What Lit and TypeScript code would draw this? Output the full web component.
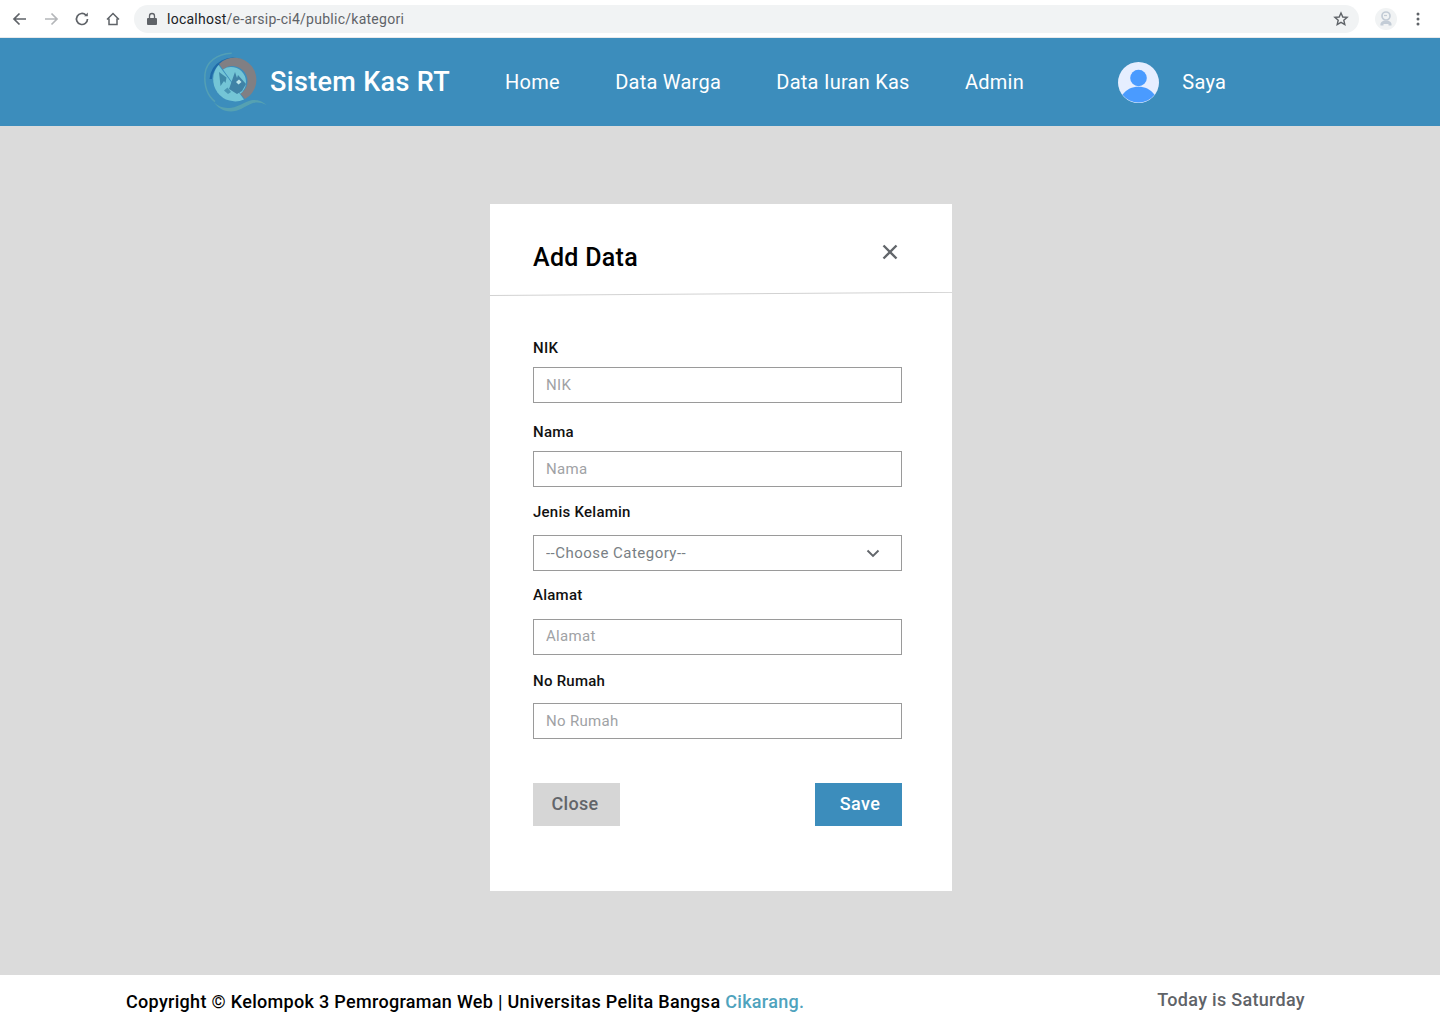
import { LitElement, html, css } from "lit";
import { customElement } from "lit/decorators.js";

@customElement("app-root")
export class AppRoot extends LitElement {
  static styles = css`
    :host { display: block; width: 1440px; height: 1024px; overflow: hidden; font-family: Roboto, "Liberation Sans", sans-serif; background: #dbdbdb; }
    * { box-sizing: border-box; }
    .page { display: flex; flex-direction: column; height: 1024px; }
    .chrome { height: 38px; background: #fff; display: flex; align-items: center; border-bottom: 1px solid #e8e9eb; flex: none; }
    .cicon { width: 20px; height: 20px; flex: none; display: block; }
    .c1 { margin-left: 10px; }
    .c2 { margin-left: 11px; }
    .c3 { margin-left: 11px; }
    .c4 { margin-left: 11px; }
    .omni { margin-left: 11px; width: 1225px; height: 28px; border-radius: 14px; background: #f1f3f4; display: flex; align-items: center; padding: 0 9px 0 12px; flex: none; }
    .lock { width: 12px; height: 14px; flex: none; }
    .url { margin-left: 9px; font-size: 14px; letter-spacing: 0.26px; color: #5f6368; flex: 1; white-space: nowrap; }
    .url b { font-weight: 400; color: #202124; }
    .star { width: 18px; height: 18px; flex: none; }
    .prof { margin-left: 16px; width: 22px; height: 22px; flex: none; }
    .dots { margin-left: 11px; width: 20px; height: 20px; flex: none; }
    nav { height: 88px; background: #3c8dbc; display: flex; align-items: center; padding-left: 202px; color: #fff; flex: none; }
    .logo { width: 66px; height: 60px; flex: none; }
    .brand { margin-left: 2px; font-size: 27px; font-weight: 500; letter-spacing: 0.34px; white-space: nowrap; width: 235px; }
    .link { font-size: 20px; letter-spacing: 0.25px; white-space: nowrap; margin-right: 55.3px; }
    .avatar { width: 41px; height: 41px; flex: none; margin-left: 39px; }
    .saya { margin-left: 23px; font-size: 20px; letter-spacing: 0.25px; }
    main { flex: 1; background: #dbdbdb; padding: 78px 0 0 490px; }
    .modal { width: 462px; height: 687px; background: #fff; display: flex; flex-direction: column; }
    .head { height: 88px; padding: 38px 43px 0; display: flex; justify-content: space-between; align-items: flex-start; flex: none; }
    .title { font-size: 25px; font-weight: 500; color: #000; line-height: 30px; letter-spacing: 0.3px; padding-top: 0.5px; }
    .x { width: 18px; height: 18px; margin: 1px 10px 0 0; }
    .rule { flex: none; height: 4px; display: block; width: 462px; }
    .form { padding: 42px 50px 0 43px; display: flex; flex-direction: column; }
    .field { display: flex; flex-direction: column; position: relative; }
    .field label { font-size: 15px; font-weight: 500; height: 20px; line-height: 20px; color: #111; letter-spacing: 0.25px; }
    .f-nik input { margin-top: 9px; }
    .f-nama { margin-top: 19px; }
    .f-nama input { margin-top: 9px; }
    .f-jk { margin-top: 15px; }
    .f-jk select { margin-top: 13px; letter-spacing: 0.47px; }
    .f-al { margin-top: 14px; }
    .f-al input { margin-top: 14px; padding-bottom: 2px; }
    .f-no { margin-top: 16px; }
    .f-no input { margin-top: 12px; }
    input, select { width: 369px; height: 36px; border: 1px solid #9a9a9a; background: #fff; padding: 0 12px; font: 400 15px Roboto, sans-serif; letter-spacing: 0.3px; border-radius: 0; outline: none; appearance: none; color: #797f85; }
    input::placeholder { color: #a0a2a5; opacity: 1; }
    .chev { position: absolute; right: 22px; bottom: 12px; width: 14px; height: 12px; pointer-events: none; }
    .actions { display: flex; justify-content: space-between; margin-top: 44px; }
    button { width: 87px; height: 43px; border: 0; font: 500 18px Roboto, sans-serif; letter-spacing: 0.35px; border-radius: 0; }
    .close { background: #d6d6d6; color: #62656a; padding: 0 3px 2px 0; }
    .save { background: #3c8dbc; color: #fff; padding: 0 0 2px 3px; }
    footer { height: 49px; background: #fff; flex: none; display: flex; align-items: center; padding: 0 135px 0 126px; justify-content: space-between; }
    .copy { font-size: 18px; font-weight: 500; color: #000; white-space: nowrap; padding-top: 4px; letter-spacing: 0.31px; }
    .copy span { color: #4fa3bd; }
    .today { font-size: 18px; font-weight: 500; color: #5f6368; white-space: nowrap; padding-bottom: 1px; letter-spacing: 0.3px; }
  `;

  private field(cls: string, label: string) {
    return html`<div class="field ${cls}"><label>${label}</label><input placeholder=${label} /></div>`;
  }

  render() {
    return html`<div class="page">
      <div class="chrome">
        <svg class="cicon c1" viewBox="0 0 20 20" fill="none" stroke="#5f6368" stroke-width="1.7"><path d="M16 10H4.5M9.5 4.5 4 10l5.500 5.500"/></svg>
        <svg class="cicon c2" viewBox="0 0 20 20" fill="none" stroke="#b4b6b9" stroke-width="1.7"><path d="M4 10h11.5M10.500 4.500 16 10l-5.500 5.500"/></svg>
        <svg class="cicon c3" viewBox="0 0 20 20" fill="none" stroke="#5f6368" stroke-width="1.7"><path d="M15.500 10a5.500 5.500 0 1 1-1.600-3.900"/><path d="M15.800 3.600v3.600h-3.600" fill="#5f6368" stroke="none"/></svg>
        <svg class="cicon c4" viewBox="0 0 20 20" fill="none" stroke="#5f6368" stroke-width="1.500"><path d="M4 10.500 10 4.500l6 6M6 9.500v6h8v-6"/></svg>
        <div class="omni">
          <svg class="lock" viewBox="0 0 12 14"><path fill="#5f6368" d="M2 6h8a1 1 0 0 1 1 1v5a1 1 0 0 1-1 1H2a1 1 0 0 1-1-1V7a1 1 0 0 1 1-1z"/><path fill="none" stroke="#5f6368" stroke-width="1.300" d="M3.500 6V4a2.500 2.500 0 0 1 5 0v2"/></svg>
          <div class="url"><b>localhost</b>/e-arsip-ci4/public/kategori</div>
          <svg class="star" viewBox="0 0 18 18" fill="none" stroke="#5f6368" stroke-width="1.400"><path d="m9 3 1.800 4 4.300.400-3.300 2.800 1 4.300L9 12.300 5.200 14.500l1-4.300-3.300-2.800 4.300-.400z"/></svg>
        </div>
        <svg class="prof" viewBox="0 0 22 22"><circle cx="11" cy="11" r="11" fill="#f1f3f4"/><circle cx="11" cy="8" r="4" fill="none" stroke="#c3ccd6" stroke-width="1.700"/><path fill="none" stroke="#c3ccd6" stroke-width="1.200" d="M9 7.500h3"/><path fill="#c3ccd6" d="M5.500 17.500c-.5-3.500 2-5 5.500-5s6 1.500 5.500 5h-3v-1.500h-5v1.500z"/></svg>
        <svg class="dots" viewBox="0 0 20 20" fill="#5f6368"><circle cx="10" cy="5" r="1.500"/><circle cx="10" cy="10" r="1.500"/><circle cx="10" cy="15" r="1.500"/></svg>
      </div>
      <nav>
        <svg class="logo" viewBox="0 0 66 60" fill="none">
          <path d="M29.700 1.300C15 2 4 10 3 22c-1 12 3 22 10 27.700" stroke="#5fa9b0" stroke-width="1.500" opacity=".65"/>
          <path d="M11.300 49.700c5 5 11 7 18 6 8-1 13-6 20-7.500 6-1 11 1 15.400 4.800-6-2.800-10-3.200-15-1.500-7 3-13 8-21 8-7.500 0-13-4-17.400-9.800z" fill="#5fa9ae" opacity=".7"/>
          <path d="M8.700 27A22 22 0 0 1 41 9.500" stroke="#1f6aa8" stroke-width="2.400"/>
          <path d="M16.500 13 42 47.500A22 22 0 0 1 16.500 13z" fill="#74c5d6"/>
          <path d="M17 12A22 22 0 1 1 43 47L38.500 41.700A15 15 0 1 0 21 17.400z" fill="#817f83"/>
          <path d="M21 17.400A15 15 0 0 1 38.500 41.700z" fill="#74c5d6"/>
          <path d="M27 37 33 20l2 6 1-3 8 9-4 7-5 3z" fill="#3f82a6"/>
          <path d="M17 20l1.500 14 3.500-5 1.500 2 1-5.500z" fill="#3f89a8"/>
          <path d="M22 38.500l3.500-3 3.500 4.500-3 2z" fill="#4a96b4"/>
          <path d="M34 30l3-2.500 2.500 2.500-3 2.500z" fill="#bde4ea"/>
        </svg>
        <div class="brand">Sistem Kas RT</div>
        <div class="link">Home</div>
        <div class="link">Data Warga</div>
        <div class="link">Data Iuran Kas</div>
        <div class="link">Admin</div>
        <svg class="avatar" viewBox="0 0 41 41"><circle cx="20.500" cy="20.500" r="20.500" fill="#e6eeff"/><circle cx="20.500" cy="16" r="8.300" fill="#4a9bff"/><path fill="#4a9bff" d="M4.400 32.700C9 27 14 24.700 20.500 24.700S32 27 36.600 32.700A20.500 20.500 0 0 1 4.400 32.700z"/></svg>
        <div class="saya">Saya</div>
      </nav>
      <main>
        <div class="modal">
          <div class="head">
            <div class="title">Add Data</div>
            <svg class="x" viewBox="0 0 18 18" stroke="#62666b" stroke-width="2.400" fill="none"><path d="M2.500 2.500l13 13M15.500 2.500l-13 13"/></svg>
          </div>
          <svg class="rule" viewBox="0 0 462 4" preserveAspectRatio="none"><path d="M0 3.500 462 .3" stroke="#d2d2d2" stroke-width="1" fill="none"/></svg>
          <div class="form">
            ${this.field("f-nik", "NIK")}
            ${this.field("f-nama", "Nama")}
            <div class="field f-jk">
              <label>Jenis Kelamin</label>
              <select><option>--Choose Category--</option></select>
              <svg class="chev" viewBox="0 0 14 12" fill="none" stroke="#62666b" stroke-width="1.900"><path d="M1.500 3.500 7 9l5.500-5.500"/></svg>
            </div>
            ${this.field("f-al", "Alamat")}
            ${this.field("f-no", "No Rumah")}
            <div class="actions">
              <button class="close">Close</button>
              <button class="save">Save</button>
            </div>
          </div>
        </div>
      </main>
      <footer>
        <div class="copy">Copyright © Kelompok 3 Pemrograman Web | Universitas Pelita Bangsa <span>Cikarang.</span></div>
        <div class="today">Today is Saturday</div>
      </footer>
    </div>`;
  }
}
